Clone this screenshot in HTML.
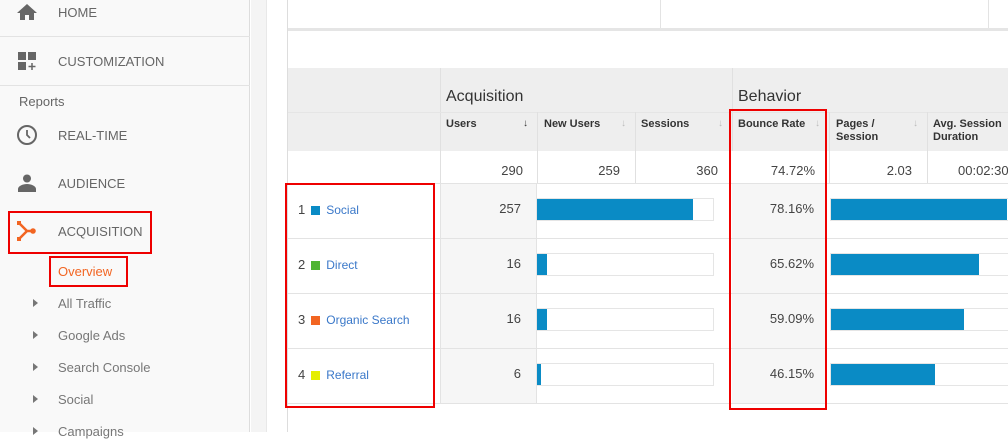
<!DOCTYPE html>
<html><head><style>
*{box-sizing:border-box;margin:0;padding:0}
body{width:1008px;height:432px;overflow:hidden;position:relative;background:#fff;font-family:"Liberation Sans",Arial,sans-serif;color:#444}
.a{position:absolute}
.side{left:0;top:0;width:250px;height:432px;background:#f9f9f9;border-right:1px solid #ddd}
.nav{position:absolute;left:58px;font-size:13px;color:#666}
.sub{position:absolute;left:58px;font-size:13px;color:#777}
.tri{position:absolute;left:33px;width:0;height:0;border-top:4px solid transparent;border-bottom:4px solid transparent;border-left:5px solid #777}
.red{position:absolute;border:2px solid #e00}
.g{background:#eee}
.c{position:absolute;font-size:12px;color:#444}
.bar{position:absolute;height:23px;border:1px solid #e5e5e5;background:#fff}
.bar i{position:absolute;left:0;top:0;bottom:0;background:#0a8bc5}
.lk{color:#3a78c9;font-size:12px}
.sq{display:inline-block;width:9px;height:9px;margin:0 6px 0 6px;vertical-align:-1px}
.h{font-size:11px;color:#333;font-weight:bold;position:absolute}
.ar{position:absolute;font-size:10px;color:#bbb}
.vl{position:absolute;width:1px;background:#e3e3e3}
.hl{position:absolute;height:1px;background:#e3e3e3}
</style></head><body>
<div class="a side"></div>
<div class="hl" style="left:0;top:36px;width:250px"></div>
<div class="hl" style="left:0;top:85px;width:250px"></div>
<svg class="a" style="left:16px;top:3px" width="22" height="18" viewBox="0 0 22 18"><path d="M11 1 L1 10 H4 V17 H9 V12 H13 V17 H18 V10 H21 Z" fill="#666"/></svg>
<div class="nav" style="top:5px">HOME</div>
<svg class="a" style="left:18px;top:52px" width="18" height="20"><rect x="0" y="0" width="8" height="8" fill="#666"/><rect x="10" y="0" width="8" height="8" fill="#666"/><rect x="0" y="10" width="8" height="8" fill="#666"/><path d="M14 11v7M10.5 14.5h7" stroke="#666" stroke-width="1.5"/></svg>
<div class="nav" style="top:54px">CUSTOMIZATION</div>
<div class="a" style="left:19px;top:94px;font-size:13px;color:#666">Reports</div>
<svg class="a" style="left:16px;top:124px" width="22" height="22"><circle cx="11" cy="11" r="9" fill="none" stroke="#666" stroke-width="2"/><path d="M11 6v5l3 3" fill="none" stroke="#666" stroke-width="1.8"/></svg>
<div class="nav" style="top:128px">REAL-TIME</div>
<svg class="a" style="left:18px;top:174px" width="18" height="18"><circle cx="9" cy="4.5" r="4" fill="#666"/><path d="M0 18v-3c0-3 5-5 9-5s9 2 9 5v3z" fill="#666"/></svg>
<div class="nav" style="top:176px">AUDIENCE</div>
<svg class="a" style="left:17px;top:221px" width="20" height="20"><path d="M2 2l8 8L2 18M10 10h6" fill="none" stroke="#f26522" stroke-width="2.5"/><circle cx="16" cy="10" r="2.8" fill="#f26522"/><rect x="0" y="0" width="4" height="4" fill="#f26522"/><rect x="0" y="16" width="4" height="4" fill="#f26522"/></svg>
<div class="nav" style="top:224px">ACQUISITION</div>
<div class="red" style="left:8px;top:211px;width:144px;height:43px"></div>
<div class="a" style="left:58px;top:264px;font-size:13px;color:#f26522">Overview</div>
<div class="red" style="left:49px;top:256px;width:79px;height:31px"></div>
<div class="tri" style="top:299px"></div><div class="sub" style="top:296px">All Traffic</div>
<div class="tri" style="top:331px"></div><div class="sub" style="top:328px">Google Ads</div>
<div class="tri" style="top:363px"></div><div class="sub" style="top:360px">Search Console</div>
<div class="tri" style="top:395px"></div><div class="sub" style="top:392px">Social</div>
<div class="tri" style="top:427px"></div><div class="sub" style="top:424px">Campaigns</div>

<div class="a" style="left:251px;top:0;width:36px;height:432px;background:#f4f4f4"></div>
<div class="vl" style="left:266px;top:0;height:432px;background:#e8e8e8"></div>
<div class="a" style="left:267px;top:0;width:20px;height:432px;background:#fff"></div>
<div class="vl" style="left:287px;top:0;height:432px;background:#ddd"></div>
<div class="vl" style="left:660px;top:0;height:28px"></div>
<div class="vl" style="left:988px;top:0;height:28px"></div>
<div class="a" style="left:288px;top:28px;width:720px;height:3px;background:#e5e5e5"></div>

<div class="a g" style="left:288px;top:68px;width:720px;height:83px"></div>
<div class="vl" style="left:440px;top:68px;height:115px;background:#e0e0e0"></div>
<div class="vl" style="left:732px;top:68px;height:115px;background:#e0e0e0"></div>
<div class="hl" style="left:288px;top:112px;width:720px;background:#e5e5e5"></div>
<div class="a" style="left:446px;top:88px;font-size:16px;color:#333">Acquisition</div>
<div class="a" style="left:738px;top:88px;font-size:16px;color:#333">Behavior</div>
<div class="vl" style="left:537px;top:112px;height:71px;background:#e0e0e0"></div>
<div class="vl" style="left:635px;top:112px;height:71px;background:#e0e0e0"></div>
<div class="vl" style="left:829px;top:112px;height:71px;background:#e0e0e0"></div>
<div class="vl" style="left:927px;top:112px;height:71px;background:#e0e0e0"></div>
<div class="h" style="left:446px;top:118px">Users</div><div class="ar" style="left:523px;top:118px;color:#333">&#8595;</div>
<div class="h" style="left:544px;top:118px">New Users</div><div class="ar" style="left:621px;top:118px">&#8595;</div>
<div class="h" style="left:641px;top:118px">Sessions</div><div class="ar" style="left:718px;top:118px">&#8595;</div>
<div class="h" style="left:738px;top:118px">Bounce Rate</div><div class="ar" style="left:815px;top:118px">&#8595;</div>
<div class="h" style="left:836px;top:118px;line-height:13px">Pages /<br>Session</div><div class="ar" style="left:913px;top:118px">&#8595;</div>
<div class="h" style="left:933px;top:118px;line-height:13px">Avg. Session<br>Duration</div>

<div class="a" style="left:441px;top:151px;width:96px;height:32px;background:#fff"></div>
<div class="a" style="left:732px;top:151px;width:97px;height:32px;background:#fff"></div>
<div class="c" style="right:485px;top:163px;font-size:13px">290</div>
<div class="c" style="right:388px;top:163px;font-size:13px">259</div>
<div class="c" style="right:290px;top:163px;font-size:13px">360</div>
<div class="c" style="right:193px;top:163px;font-size:13px">74.72%</div>
<div class="c" style="right:96px;top:163px;font-size:13px">2.03</div>
<div class="c" style="left:958px;top:163px;font-size:13px">00:02:30</div>
<div class="hl" style="left:288px;top:183px;width:720px"></div>

<div class="a" style="left:441px;top:184px;width:96px;height:219px;background:#f6f6f6"></div>
<div class="a" style="left:732px;top:184px;width:94px;height:219px;background:#f6f6f6"></div>
<div class="vl" style="left:440px;top:184px;height:219px"></div>
<div class="vl" style="left:536px;top:184px;height:219px"></div>
<div class="vl" style="left:826px;top:184px;height:219px"></div>
<div class="hl" style="left:288px;top:238px;width:720px"></div>
<div class="hl" style="left:288px;top:293px;width:720px"></div>
<div class="hl" style="left:288px;top:348px;width:720px"></div>
<div class="hl" style="left:288px;top:403px;width:720px"></div>

<div class="c" style="left:298px;top:202px;font-size:13px">1<span class="sq" style="background:#0a8bc5"></span><span class="lk">Social</span></div>
<div class="c" style="left:298px;top:257px;font-size:13px">2<span class="sq" style="background:#50b432"></span><span class="lk">Direct</span></div>
<div class="c" style="left:298px;top:312px;font-size:13px">3<span class="sq" style="background:#f26522"></span><span class="lk">Organic Search</span></div>
<div class="c" style="left:298px;top:367px;font-size:13px">4<span class="sq" style="background:#e5ee00"></span><span class="lk">Referral</span></div>

<div class="c" style="right:487px;top:201px;font-size:13px">257</div>
<div class="c" style="right:487px;top:256px;font-size:13px">16</div>
<div class="c" style="right:487px;top:311px;font-size:13px">16</div>
<div class="c" style="right:487px;top:366px;font-size:13px">6</div>
<div class="c" style="right:194px;top:201px;font-size:13px">78.16%</div>
<div class="c" style="right:194px;top:256px;font-size:13px">65.62%</div>
<div class="c" style="right:194px;top:311px;font-size:13px">59.09%</div>
<div class="c" style="right:194px;top:366px;font-size:13px">46.15%</div>

<div class="bar" style="left:536px;top:198px;width:178px"><i style="width:156px"></i></div>
<div class="bar" style="left:536px;top:253px;width:178px"><i style="width:10px"></i></div>
<div class="bar" style="left:536px;top:308px;width:178px"><i style="width:10px"></i></div>
<div class="bar" style="left:536px;top:363px;width:178px"><i style="width:4px"></i></div>
<div class="bar" style="left:830px;top:198px;width:178px;border-right:none"><i style="width:176px"></i></div>
<div class="bar" style="left:830px;top:253px;width:178px;border-right:none"><i style="width:148px"></i></div>
<div class="bar" style="left:830px;top:308px;width:178px;border-right:none"><i style="width:133px"></i></div>
<div class="bar" style="left:830px;top:363px;width:178px;border-right:none"><i style="width:104px"></i></div>

<div class="red" style="left:285px;top:183px;width:150px;height:225px"></div>
<div class="red" style="left:729px;top:109px;width:98px;height:301px"></div>
</body></html>
